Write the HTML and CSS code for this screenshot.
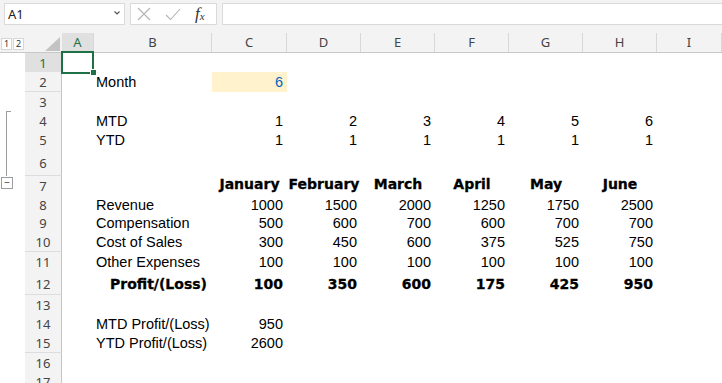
FILE: index.html
```html
<!DOCTYPE html>
<html lang="en">
<head>
    <meta charset="UTF-8">
    <title>Profit summary</title>
    <link rel="stylesheet" href="styles.css">
</head>
<body>
    <div class="toolbar">
        <div class="namebox">
            <span>A1</span>
            <svg class="chev" width="6" height="4" viewBox="0 0 6 4"><path d="M0.5 0.5 L3 3 L5.5 0.5" fill="none" stroke="#555" stroke-width="1.2"/></svg>
        </div>
        <div class="fxbox">
            <svg class="ic-x" width="14" height="14" viewBox="0 0 14 14"><path d="M1 1 L13 13 M13 1 L1 13" stroke="#b4b4b4" stroke-width="1.1"/></svg>
            <svg class="ic-ok" width="16" height="13" viewBox="0 0 16 13"><path d="M1 7 L5.5 11.5 L15 1" fill="none" stroke="#b4b4b4" stroke-width="1.1"/></svg>
            <span class="fx">f<sub>x</sub></span>
        </div>
        <div class="formula"></div>
    </div>

    <div class="sheet">
        <div class="row head">
            <div class="levels"><span>1</span><span>2</span></div>
            <div class="corner"><svg width="15" height="14" viewBox="0 0 15 14"><polygon points="15,0 15,14 0,14" fill="#c3c3c3"/></svg></div>
            <div class="colh sel">A</div>
            <div class="colh">B</div>
            <div class="colh">C</div>
            <div class="colh">D</div>
            <div class="colh">E</div>
            <div class="colh">F</div>
            <div class="colh">G</div>
            <div class="colh">H</div>
            <div class="colh">I</div>
        </div>

        <div class="row">
            <div class="ol"></div><div class="rowh sel">1</div>
            <div class="c active"></div><div class="c"></div><div class="c"></div><div class="c"></div><div class="c"></div><div class="c"></div><div class="c"></div><div class="c"></div><div class="c"></div>
        </div>
        <div class="row h20">
            <div class="ol"></div><div class="rowh">2</div>
            <div class="c"></div><div class="c">Month</div><div class="c num input">6</div><div class="c"></div><div class="c"></div><div class="c"></div><div class="c"></div><div class="c"></div><div class="c"></div>
        </div>
        <div class="row">
            <div class="ol"></div><div class="rowh">3</div>
            <div class="c"></div><div class="c"></div><div class="c"></div><div class="c"></div><div class="c"></div><div class="c"></div><div class="c"></div><div class="c"></div><div class="c"></div>
        </div>
        <div class="row">
            <div class="ol"><div class="bracket top"></div></div><div class="rowh">4</div>
            <div class="c"></div><div class="c">MTD</div><div class="c num">1</div><div class="c num">2</div><div class="c num">3</div><div class="c num">4</div><div class="c num">5</div><div class="c num">6</div><div class="c"></div>
        </div>
        <div class="row">
            <div class="ol"><div class="bracket"></div></div><div class="rowh">5</div>
            <div class="c"></div><div class="c">YTD</div><div class="c num">1</div><div class="c num">1</div><div class="c num">1</div><div class="c num">1</div><div class="c num">1</div><div class="c num">1</div><div class="c"></div>
        </div>
        <div class="row h27">
            <div class="ol"><div class="bracket"></div></div><div class="rowh">6</div>
            <div class="c"></div><div class="c"></div><div class="c"></div><div class="c"></div><div class="c"></div><div class="c"></div><div class="c"></div><div class="c"></div><div class="c"></div>
        </div>
        <div class="row">
            <div class="ol"><div class="collapse">&minus;</div></div><div class="rowh">7</div>
            <div class="c"></div><div class="c"></div>
            <div class="c mon">January</div><div class="c mon">February</div><div class="c mon">March</div><div class="c mon">April</div><div class="c mon">May</div><div class="c mon">June</div>
            <div class="c"></div>
        </div>
        <div class="row h18">
            <div class="ol"></div><div class="rowh">8</div>
            <div class="c"></div><div class="c">Revenue</div><div class="c num">1000</div><div class="c num">1500</div><div class="c num">2000</div><div class="c num">1250</div><div class="c num">1750</div><div class="c num">2500</div><div class="c"></div>
        </div>
        <div class="row">
            <div class="ol"></div><div class="rowh">9</div>
            <div class="c"></div><div class="c">Compensation</div><div class="c num">500</div><div class="c num">600</div><div class="c num">700</div><div class="c num">600</div><div class="c num">700</div><div class="c num">700</div><div class="c"></div>
        </div>
        <div class="row h20">
            <div class="ol"></div><div class="rowh">10</div>
            <div class="c"></div><div class="c">Cost of Sales</div><div class="c num">300</div><div class="c num">450</div><div class="c num">600</div><div class="c num">375</div><div class="c num">525</div><div class="c num">750</div><div class="c"></div>
        </div>
        <div class="row">
            <div class="ol"></div><div class="rowh">11</div>
            <div class="c"></div><div class="c">Other Expenses</div><div class="c num">100</div><div class="c num">100</div><div class="c num">100</div><div class="c num">100</div><div class="c num">100</div><div class="c num">100</div><div class="c"></div>
        </div>
        <div class="row h24">
            <div class="ol"></div><div class="rowh low">12</div>
            <div class="c"></div><div class="c bold indent">Profit/(Loss)</div><div class="c num bold">100</div><div class="c num bold">350</div><div class="c num bold">600</div><div class="c num bold">175</div><div class="c num bold">425</div><div class="c num bold">950</div><div class="c"></div>
        </div>
        <div class="row">
            <div class="ol"></div><div class="rowh">13</div>
            <div class="c"></div><div class="c"></div><div class="c"></div><div class="c"></div><div class="c"></div><div class="c"></div><div class="c"></div><div class="c"></div><div class="c"></div>
        </div>
        <div class="row">
            <div class="ol"></div><div class="rowh">14</div>
            <div class="c"></div><div class="c">MTD Profit/(Loss)</div><div class="c num">950</div><div class="c"></div><div class="c"></div><div class="c"></div><div class="c"></div><div class="c"></div><div class="c"></div>
        </div>
        <div class="row h20">
            <div class="ol"></div><div class="rowh">15</div>
            <div class="c"></div><div class="c">YTD Profit/(Loss)</div><div class="c num">2600</div><div class="c"></div><div class="c"></div><div class="c"></div><div class="c"></div><div class="c"></div><div class="c"></div>
        </div>
        <div class="row">
            <div class="ol"></div><div class="rowh">16</div>
            <div class="c"></div><div class="c"></div><div class="c"></div><div class="c"></div><div class="c"></div><div class="c"></div><div class="c"></div><div class="c"></div><div class="c"></div>
        </div>
        <div class="row">
            <div class="ol"></div><div class="rowh">17</div>
            <div class="c"></div><div class="c"></div><div class="c"></div><div class="c"></div><div class="c"></div><div class="c"></div><div class="c"></div><div class="c"></div><div class="c"></div>
        </div>
    </div>
</body>
</html>
```

FILE: styles.css
```css
* {
    margin: 0;
    padding: 0;
    box-sizing: border-box;
}

body {
    width: 722px;
    height: 383px;
    overflow: hidden;
    background: #ffffff;
    font-family: "Liberation Sans", Arial, sans-serif;
    color: #000;
}

/* formula bar */

.toolbar {
    height: 28px;
    display: flex;
    align-items: flex-start;
    gap: 5px;
    padding: 3px 0 0 4px;
    background: #f3f3f3;
}

.namebox,
.fxbox,
.formula {
    height: 22px;
    background: #fff;
    border: 1px solid #dadada;
}

.namebox {
    width: 121px;
    display: flex;
    align-items: center;
    justify-content: space-between;
    padding: 0 4px 0 3px;
    font-family: "Noto Sans", sans-serif;
    font-size: 13px;
    color: #222;
}

.chev {
    margin-top: -3px;
}

.fxbox {
    width: 87px;
    display: flex;
    align-items: center;
    padding-left: 6px;
}

.ic-ok {
    margin-left: 14px;
}

.fx {
    margin-left: 14px;
    font-family: "Liberation Serif", serif;
    font-style: italic;
    font-size: 17px;
    color: #333;
    line-height: 1;
    margin-top: -2px;
}

.fx sub {
    font-size: 11px;
    vertical-align: -1px;
}

.formula {
    flex: 1;
    border-right: none;
}

/* grid */

.row {
    display: grid;
    grid-template-columns: 25px 37px 32px 118px 75px 74px 74px 74px 74px 74px 1fr;
    height: 19px;
}

.row.h18 { height: 18px; }
.row.h20 { height: 20px; }
.row.h24 { height: 24px; }
.row.h27 { height: 27px; }

.row.head {
    height: 25px;
    background: #f3f3f3;
    border-bottom: 1px solid #c8c8c8;
    align-items: end;
}

.levels {
    display: flex;
    gap: 1px;
    padding-left: 1px;
    margin-bottom: 2px;
}

.levels span {
    width: 11px;
    height: 12px;
    background: #fff;
    border: 1px solid #d6d6d6;
    font-family: "Noto Sans", sans-serif;
    font-size: 9px;
    line-height: 10px;
    text-align: center;
    color: #333;
}

.corner {
    display: flex;
    justify-content: flex-end;
    padding-right: 2px;
    margin-bottom: 1px;
}

.colh {
    height: 19px;
    border-right: 1px solid #d8d8d8;
    text-align: center;
    font-family: "Noto Sans", sans-serif;
    font-size: 13px;
    line-height: 19px;
    color: #444;
}

.colh.sel,
.rowh.sel {
    background: #e0e0e0;
    color: #1e7145;
}

.rowh {
    display: flex;
    align-items: center;
    justify-content: center;
    background: #f3f3f3;
    border-right: 1px solid #c4c4c4;
    border-bottom: 1px solid #dddddd;
    font-family: "Noto Sans", sans-serif;
    font-size: 13px;
    color: #444;
    padding-top: 1px;
}

.rowh.low {
    align-items: flex-end;
    padding-bottom: 1px;
}

/* outline gutter */

.ol {
    background: #fff;
}

.bracket {
    margin-left: 6px;
    width: 5px;
    height: 100%;
    border-left: 1px solid #9c9c9c;
}

.bracket.top {
    border-top: 1px solid #9c9c9c;
}

.collapse {
    width: 12px;
    height: 12px;
    margin: 1px 0 0 1px;
    border: 1px solid #9c9c9c;
    background: #fff;
    font-family: "Noto Sans", sans-serif;
    font-size: 10px;
    line-height: 9px;
    text-align: center;
    color: #333;
}

/* cells */

.c {
    display: flex;
    align-items: flex-end;
    padding: 0 4px 1px 2px;
    font-size: 14.5px;
    line-height: 17px;
    white-space: nowrap;
}

.c.num {
    justify-content: flex-end;
}

.c.input {
    background: #fff2cc;
    color: #0563c1;
}

.c.mon,
.c.bold {
    font-family: "DejaVu Sans", sans-serif;
    font-weight: 700;
    font-size: 14px;
    -webkit-text-stroke: 0.3px #000;
}

.c.mon {
    justify-content: center;
    padding: 0 0 3px 0;
    overflow: visible;
}

.c.bold {
    padding-bottom: 2px;
}

.c.indent {
    padding-left: 16px;
}

.c.active {
    position: relative;
}

.c.active::before {
    content: "";
    position: absolute;
    left: -1px;
    top: -2px;
    right: 0;
    bottom: -1px;
    border: 2px solid #1e7145;
}

.c.active::after {
    content: "";
    position: absolute;
    right: -3px;
    bottom: -3px;
    width: 5px;
    height: 5px;
    background: #1e7145;
    border: 1px solid #fff;
}
```
